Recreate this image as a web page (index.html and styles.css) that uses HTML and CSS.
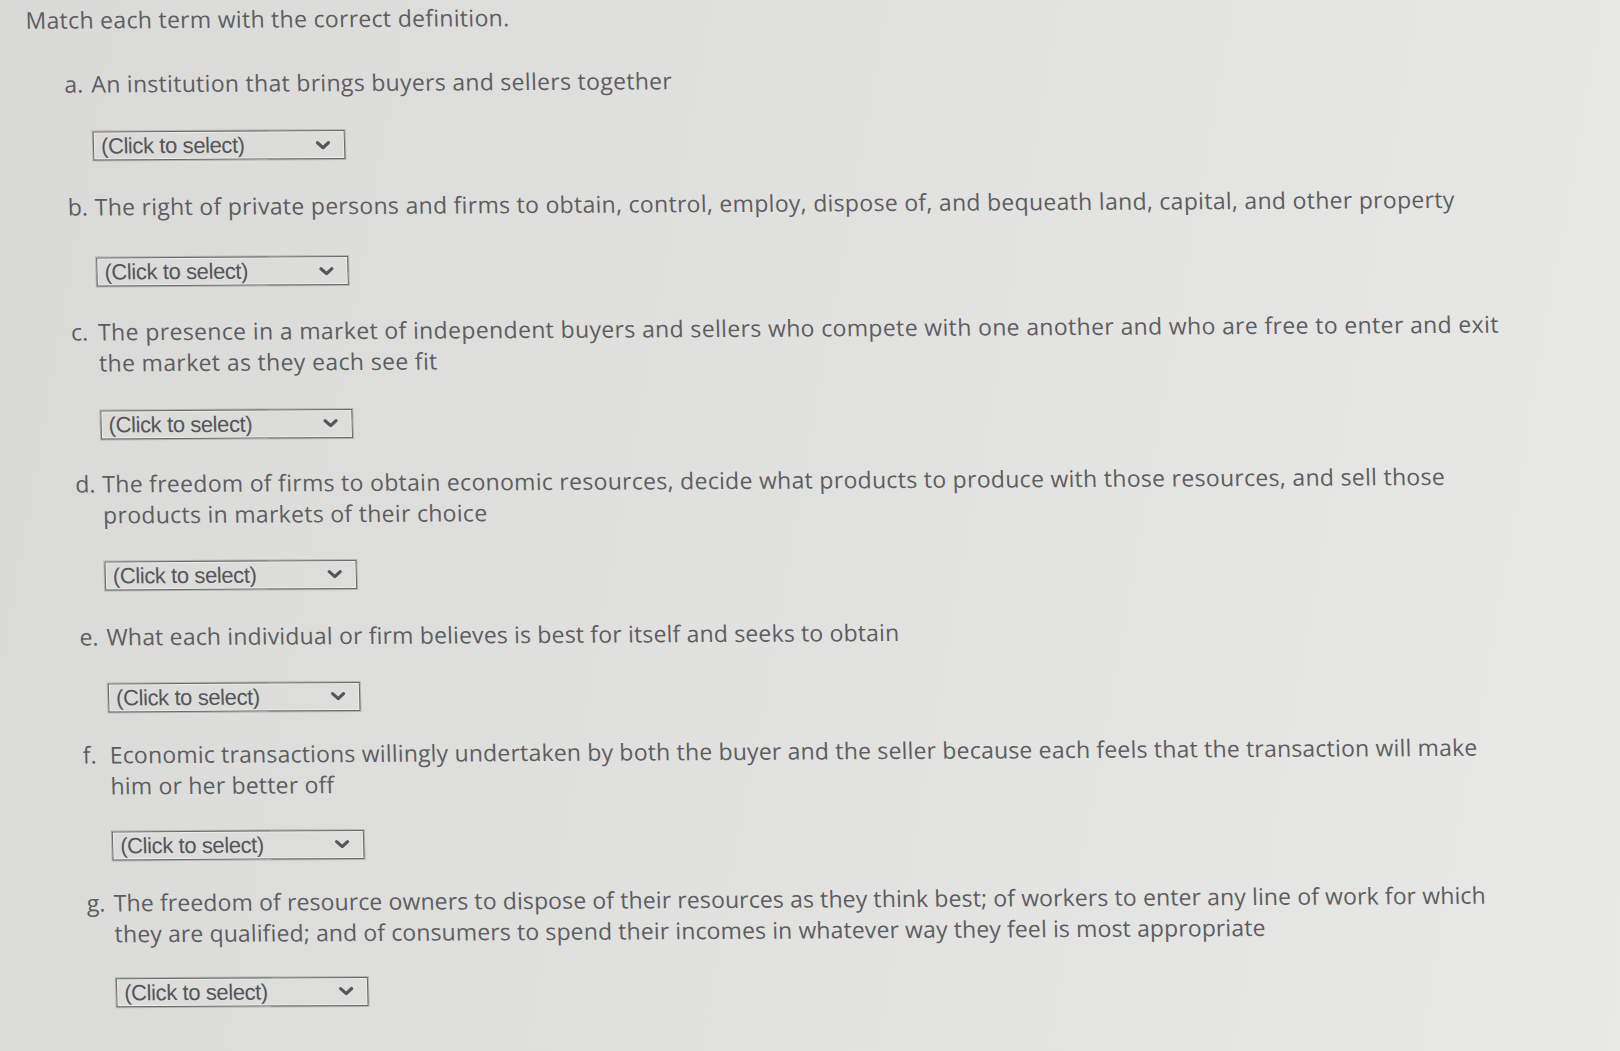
FILE: index.html
```html
<!DOCTYPE html>
<html>
<head>
<meta charset="utf-8">
<link rel="stylesheet" href="styles.css">
</head>
<body>
<div class="sheet">
  <div class="title">Match each term with the correct definition.</div>
  <ol class="items">
    <li class="item">
      <span class="label">a.</span>
      <div class="body">
        <div class="text">An institution that brings buyers and sellers together</div>
        <div class="select"><span>(Click to select)</span><svg class="chev" viewBox="0 0 16 10" width="16" height="10"><path d="M2.5 2.5 L8 7.5 L13.5 2.5" /></svg></div>
      </div>
    </li>
    <li class="item">
      <span class="label">b.</span>
      <div class="body">
        <div class="text">The right of private persons and firms to obtain, control, employ, dispose of, and bequeath land, capital, and other property</div>
        <div class="select"><span>(Click to select)</span><svg class="chev" viewBox="0 0 16 10" width="16" height="10"><path d="M2.5 2.5 L8 7.5 L13.5 2.5" /></svg></div>
      </div>
    </li>
    <li class="item">
      <span class="label">c.</span>
      <div class="body">
        <div class="text">The presence in a market of independent buyers and sellers who compete with one another and who are free to enter and exit<br>the market as they each see fit</div>
        <div class="select"><span>(Click to select)</span><svg class="chev" viewBox="0 0 16 10" width="16" height="10"><path d="M2.5 2.5 L8 7.5 L13.5 2.5" /></svg></div>
      </div>
    </li>
    <li class="item">
      <span class="label">d.</span>
      <div class="body">
        <div class="text">The freedom of firms to obtain economic resources, decide what products to produce with those resources, and sell those<br>products in markets of their choice</div>
        <div class="select"><span>(Click to select)</span><svg class="chev" viewBox="0 0 16 10" width="16" height="10"><path d="M2.5 2.5 L8 7.5 L13.5 2.5" /></svg></div>
      </div>
    </li>
    <li class="item">
      <span class="label">e.</span>
      <div class="body">
        <div class="text">What each individual or firm believes is best for itself and seeks to obtain</div>
        <div class="select"><span>(Click to select)</span><svg class="chev" viewBox="0 0 16 10" width="16" height="10"><path d="M2.5 2.5 L8 7.5 L13.5 2.5" /></svg></div>
      </div>
    </li>
    <li class="item">
      <span class="label">f.</span>
      <div class="body">
        <div class="text">Economic transactions willingly undertaken by both the buyer and the seller because each feels that the transaction will make<br>him or her better off</div>
        <div class="select"><span>(Click to select)</span><svg class="chev" viewBox="0 0 16 10" width="16" height="10"><path d="M2.5 2.5 L8 7.5 L13.5 2.5" /></svg></div>
      </div>
    </li>
    <li class="item">
      <span class="label">g.</span>
      <div class="body">
        <div class="text">The freedom of resource owners to dispose of their resources as they think best; of workers to enter any line of work for which<br>they are qualified; and of consumers to spend their incomes in whatever way they feel is most appropriate</div>
        <div class="select"><span>(Click to select)</span><svg class="chev" viewBox="0 0 16 10" width="16" height="10"><path d="M2.5 2.5 L8 7.5 L13.5 2.5" /></svg></div>
      </div>
    </li>
  </ol>
</div>
</body>
</html>
```

FILE: styles.css
```css
html, body {
  margin: 0;
  padding: 0;
  height: 100%;
}
body {
  background: linear-gradient(100deg, #d9d9d7 0%, #dfdfdd 35%, #e4e4e2 70%, #e8e8e6 100%);
  overflow: hidden;
  font-family: "Open Sans", Lato, "Liberation Sans", sans-serif;
  color: #5d5d62;
}
.sheet {
  padding: 5px 0 0 25px;
  width: 1580px;
  transform-origin: 0 0;
  transform: rotate(-0.32deg) skewX(1.25deg);
}
.title {
  font-size: 23px;
  letter-spacing: 0.3px;
  line-height: 31px;
  margin-bottom: 31px;
  white-space: nowrap;
}
.items {
  list-style: none;
  margin: 0 0 0 37px;
  padding: 0;
}
.item {
  display: flex;
}
.item:nth-child(1) { margin-bottom: 29px; }
.item:nth-child(2) { margin-bottom: 28px; }
.item:nth-child(3) { margin-bottom: 27px; }
.item:nth-child(4) { margin-bottom: 29px; }
.item:nth-child(5) { margin-bottom: 25px; }
.item:nth-child(6) { margin-bottom: 25px; }
.label {
  width: 27px;
  flex: none;
  padding-top: 2px;
  font-size: 23px;
  line-height: 31px;
}
.body {
  flex: 1;
}
.text {
  padding-top: 2px;
  font-size: 23px;
  letter-spacing: 0.3px;
  line-height: 31px;
  white-space: nowrap;
}
.item:nth-child(3) .text { letter-spacing: 0.36px; }
.item:nth-child(5) .text { letter-spacing: 0.17px; }
.item:nth-child(6) .text { letter-spacing: 0.19px; }
.item:nth-child(7) .text { letter-spacing: 0.12px; }
.select {
  margin-top: 32px;
  width: 252px;
  height: 29px;
  box-sizing: border-box;
  border: 1px solid #6a6a6a;
  box-shadow: inset 0 0 0 1px #ececea, 0 0 0 1px #b4b4b2;
  display: flex;
  align-items: center;
  justify-content: space-between;
  padding: 0 13px 0 7px;
  font-family: "Liberation Sans", Arial, sans-serif;
  font-size: 22px;
  letter-spacing: -0.4px;
  color: #55555a;
}
.item:nth-child(2) .select { margin-top: 35px; }
.item:nth-child(3) .select { margin-top: 31.5px; }
.item:nth-child(4) .select { margin-top: 31px; }
.item:nth-child(5) .select { margin-top: 31px; }
.item:nth-child(6) .select { margin-top: 30px; }
.item:nth-child(7) .select { margin-top: 29px; }
.select span {
  line-height: 27px;
}
.chev {
  display: block;
}
.chev path {
  fill: none;
  stroke: #56565a;
  stroke-width: 3.2;
  stroke-linecap: round;
  stroke-linejoin: round;
}
```
